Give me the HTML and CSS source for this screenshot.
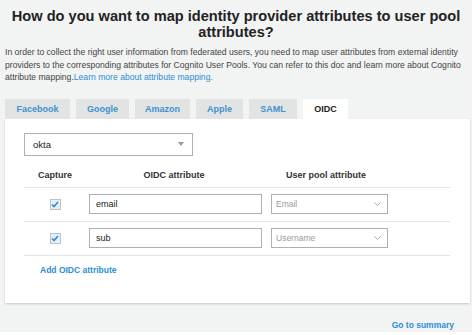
FILE: index.html
```html
<!DOCTYPE html>
<html lang="en">

<head>
    <meta charset="UTF-8">
    <title>Attribute mapping</title>
    <link rel="stylesheet" href="styles.css">
</head>

<body>
    <div class="page">
        <h1>How do you want to map identity provider attributes to user pool attributes?</h1>
        <p class="intro">In order to collect the right user information from federated users, you need to map user attributes from external identity providers to the corresponding attributes for Cognito User Pools. You can refer to this doc and learn more about Cognito attribute mapping.<a href="#">Learn more about attribute mapping.</a></p>

        <div class="tabs">
            <span class="tab">Facebook</span>
            <span class="tab">Google</span>
            <span class="tab">Amazon</span>
            <span class="tab">Apple</span>
            <span class="tab">SAML</span>
            <span class="tab active">OIDC</span>
        </div>

        <div class="panel">
            <div class="provider">
                <span>okta</span>
                <svg class="caret" width="6" height="4" viewBox="0 0 6 4"><path d="M0 0h6L3 4z" fill="#999"/></svg>
            </div>

            <div class="grid head">
                <span>Capture</span>
                <span>OIDC attribute</span>
                <span>User pool attribute</span>
                <span></span>
            </div>
            <div class="grid row">
                <span class="check"><svg width="8" height="7" viewBox="0 0 8 7"><path d="M1 3.5l2 2 4-4.5" fill="none" stroke="#2a8ad0" stroke-width="1.6"/></svg></span>
                <span class="field">email</span>
                <span class="pick">Email<svg width="7" height="4" viewBox="0 0 7 4"><path d="M.5 .5l3 3 3-3" fill="none" stroke="#aaa"/></svg></span>
                <span></span>
            </div>
            <div class="grid row">
                <span class="check"><svg width="8" height="7" viewBox="0 0 8 7"><path d="M1 3.5l2 2 4-4.5" fill="none" stroke="#2a8ad0" stroke-width="1.6"/></svg></span>
                <span class="field">sub</span>
                <span class="pick">Username<svg width="7" height="4" viewBox="0 0 7 4"><path d="M.5 .5l3 3 3-3" fill="none" stroke="#aaa"/></svg></span>
                <span></span>
            </div>

            <a class="add" href="#">Add OIDC attribute</a>
        </div>

        <div class="footer">
            <a href="#">Go to summary</a>
        </div>
    </div>
</body>

</html>
```

FILE: styles.css
```css
body {
    margin: 0;
    background: #fff;
    font-family: "Liberation Sans", Arial, sans-serif;
    color: #444;
}

.page {
    width: 472px;
    height: 332px;
    background: #f2f3f3;
    overflow: hidden;
}

h1 {
    margin: 0;
    padding: 8px 4px 0;
    font-size: 14.6px;
    line-height: 16px;
    text-align: center;
    color: #222;
}

.intro {
    margin: 6px 5px 0;
    font-size: 8.6px;
    line-height: 12.5px;
    color: #444;
}

a {
    color: #2a8fd3;
    text-decoration: none;
}

.tabs {
    display: flex;
    gap: 6px;
    margin: 15px 0 0 5px;
}

.tab {
    height: 20px;
    line-height: 20px;
    background: #e2e3e3;
    color: #3d92cf;
    font-size: 9px;
    font-weight: bold;
    text-align: center;
    width: 65px;
}

.tab:nth-child(2) { width: 53px; }
.tab:nth-child(3) { width: 55px; }
.tab:nth-child(4) { width: 47px; }
.tab:nth-child(5) { width: 48px; }

.tab.active {
    background: #fff;
    color: #222;
    width: 45px;
}

.panel {
    margin: 0 2px 0 5px;
    height: 184px;
    background: #fff;
    box-shadow: 0 1px 2px rgba(0, 0, 0, 0.18);
    padding: 14px 20px 0 19px;
    box-sizing: border-box;
}

.provider {
    width: 169px;
    height: 23px;
    box-sizing: border-box;
    border: 1px solid #aab0b5;
    display: flex;
    align-items: center;
    justify-content: space-between;
    padding: 0 8px;
    font-size: 9.5px;
    color: #222;
}

.grid {
    display: grid;
    grid-template-columns: 62px 176px 128px 1fr;
    align-items: center;
    border-bottom: 1px solid #e4e6e6;
}

.head {
    height: 24px;
    margin-top: 5px;
    padding-top: 2px;
    font-size: 9px;
    font-weight: bold;
    color: #333;
    text-align: center;
}

.row {
    height: 33px;
}

.check {
    justify-self: center;
    width: 9px;
    height: 9px;
    border: 1px solid #b9c4cc;
    background: #e8eef3;
    display: flex;
    align-items: center;
    justify-content: center;
}

.field {
    margin-left: 3px;
    height: 20px;
    border: 1px solid #aab0b5;
    box-sizing: border-box;
    display: flex;
    align-items: center;
    padding: 0 6px;
    font-size: 9px;
    color: #222;
}

.pick {
    margin-left: 9px;
    width: 117px;
    height: 20px;
    border: 1px solid #aab0b5;
    box-sizing: border-box;
    display: flex;
    align-items: center;
    justify-content: space-between;
    padding: 0 6px 0 4px;
    font-size: 8.5px;
    color: #9a9a9a;
}

.add {
    display: block;
    margin: 9px 0 0 16px;
    font-size: 8.5px;
    font-weight: bold;
}

.footer {
    display: flex;
    justify-content: flex-end;
    padding: 17px 18px 0 0;
    font-size: 8.5px;
    font-weight: bold;
}
```
